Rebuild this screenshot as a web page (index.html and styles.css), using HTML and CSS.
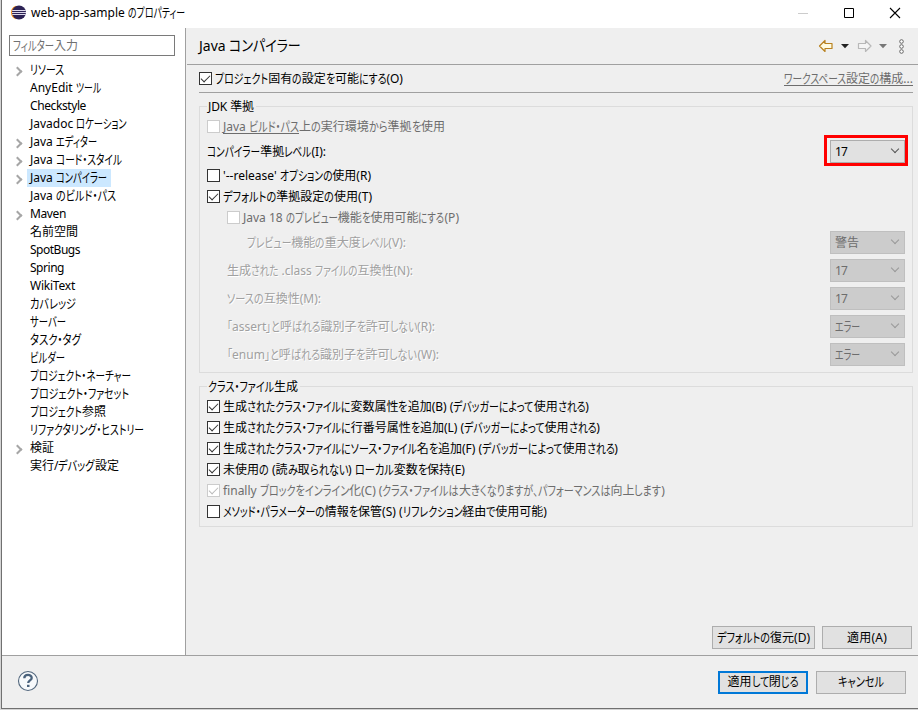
FILE: index.html
```html
<!DOCTYPE html>
<html lang="ja">
  <head>
    <meta charset="UTF-8" />
    <meta name="viewport" content="width=device-width, initial-scale=1.0" />
    <title>web-app-sample のプロパティー</title>
    <link rel="stylesheet" href="styles.css">
  </head>
  <body>
    <div class="window">
      <div class="titlebar">
        <svg class="logo" width="15" height="15" viewBox="0 0 15 15">
          <path d="M5 .8A7 7 0 0 0 5 14.2" fill="#f7941e" />
          <circle cx="8" cy="7.5" r="7" fill="#2c2255" />
          <path d="M1.2 5.5h13.6M1 7.5h14M1.2 9.5h13.6" stroke="#dcd8ea" stroke-width="1.1" />
        </svg>
        <span class="caption" data-width="154">web-app-sample のプロパティー</span>
        <div class="controls">
          <svg width="12" height="12" viewBox="0 0 12 12"><path d="M1 6.5h10" stroke="#ccc" /></svg>
          <svg width="12" height="12" viewBox="0 0 12 12"><path d="M1.5 1.5h9v9h-9z" fill="none" stroke="#000" /></svg>
          <svg width="12" height="12" viewBox="0 0 12 12"><path d="M1 1l10 10M11 1L1 11" stroke="#000" stroke-width="1.1" /></svg>
        </div>
      </div>

      <div class="main">
        <div class="sidebar">
          <div class="filter"><span data-width="65">フィルター入力</span></div>
          <ul class="tree">
            <li class="parent"><span data-width="34">リソース</span></li>
            <li><span data-width="71">AnyEdit ツール</span></li>
            <li><span data-width="56">Checkstyle</span></li>
            <li><span data-width="97">Javadoc ロケーション</span></li>
            <li class="parent"><span data-width="67">Java エディター</span></li>
            <li class="parent"><span data-width="92">Java コード・スタイル</span></li>
            <li class="parent selected"><span data-width="77">Java コンパイラー</span></li>
            <li><span data-width="86">Java のビルド・パス</span></li>
            <li class="parent"><span data-width="36">Maven</span></li>
            <li><span data-width="48">名前空間</span></li>
            <li><span data-width="50">SpotBugs</span></li>
            <li><span data-width="34">Spring</span></li>
            <li><span data-width="45">WikiText</span></li>
            <li><span data-width="46">カバレッジ</span></li>
            <li><span data-width="36">サーバー</span></li>
            <li><span data-width="51">タスク・タグ</span></li>
            <li><span data-width="35">ビルダー</span></li>
            <li><span data-width="101">プロジェクト・ネーチャー</span></li>
            <li><span data-width="99">プロジェクト・ファセット</span></li>
            <li><span data-width="76">プロジェクト参照</span></li>
            <li><span data-width="114">リファクタリング・ヒストリー</span></li>
            <li class="parent"><span data-width="24">検証</span></li>
            <li><span data-width="89">実行/デバッグ設定</span></li>
          </ul>
        </div>

        <div class="page">
          <div class="page-header">
            <span class="page-title" data-width="102">Java コンパイラー</span>
            <svg class="tools" width="92" height="18" viewBox="0 0 92 18">
              <path d="M1.5 9l5.500-5.500v3h7v5H7v3z" fill="#fffbe0" stroke="#b8811f" stroke-width="1.200" stroke-linejoin="round" />
              <path d="M23 7h8l-4 4.200z" fill="#222" />
              <path d="M53 9l-5.500-5.500v3h-7v5h7v3z" fill="#f5f5f5" stroke="#b8b8b8" stroke-width="1.200" stroke-linejoin="round" />
              <path d="M61 7h8l-4 4.200z" fill="#777" />
              <g fill="#fff" stroke="#666"><circle cx="83.500" cy="4.500" r="1.800" /><circle cx="83.500" cy="9.500" r="1.800" /><circle cx="83.500" cy="14.500" r="1.800" /></g>
            </svg>
          </div>

          <div class="page-body">
            <div class="project-row">
              <div class="check"><i class="box on"></i><span data-width="188">プロジェクト固有の設定を可能にする(O)</span></div>
              <span class="link" data-width="129">ワークスペース設定の構成...</span>
            </div>

            <fieldset class="group jdk">
              <legend><span data-width="46">JDK 準拠</span></legend>
              <div class="check muted first h22"><i class="box"></i><span class="link" data-width="76">Java ビルド・パス</span><span data-width="146">上の実行環境から準拠を使用</span></div>
              <div class="field h28">
                <span data-width="119">コンパイラー準拠レベル(I):</span>
                <div class="combo marked"><span data-width="12">17</span></div>
              </div>
              <div class="check h21"><i class="box"></i><span data-width="148">'--release' オプションの使用(R)</span></div>
              <div class="check h21"><i class="box on"></i><span data-width="149">デフォルトの準拠設定の使用(T)</span></div>
              <div class="check muted indent h21"><i class="box"></i><span data-width="216">Java 18 のプレビュー機能を使用可能にする(P)</span></div>
              <div class="field disabled indent-more h28">
                <span data-width="159">プレビュー機能の重大度レベル(V):</span>
                <div class="combo"><span data-width="24">警告</span></div>
              </div>
              <div class="field disabled indent h28">
                <span data-width="186">生成された .class ファイルの互換性(N):</span>
                <div class="combo"><span data-width="12">17</span></div>
              </div>
              <div class="field disabled indent h28">
                <span data-width="94">ソースの互換性(M):</span>
                <div class="combo"><span data-width="12">17</span></div>
              </div>
              <div class="field disabled indent h28">
                <span data-width="208">「assert」と呼ばれる識別子を許可しない(R):</span>
                <div class="combo"><span data-width="25">エラー</span></div>
              </div>
              <div class="field disabled indent h28">
                <span data-width="212">「enum」と呼ばれる識別子を許可しない(W):</span>
                <div class="combo"><span data-width="25">エラー</span></div>
              </div>
            </fieldset>

            <fieldset class="group classfile">
              <legend><span data-width="90">クラス・ファイル生成</span></legend>
              <div class="check h21"><i class="box on"></i><span data-width="366">生成されたクラス・ファイルに変数属性を追加(B) (デバッガーによって使用される)</span></div>
              <div class="check h21"><i class="box on"></i><span data-width="377">生成されたクラス・ファイルに行番号属性を追加(L) (デバッガーによって使用される)</span></div>
              <div class="check h21"><i class="box on"></i><span data-width="395">生成されたクラス・ファイルにソース・ファイル名を追加(F) (デバッガーによって使用される)</span></div>
              <div class="check h21"><i class="box on"></i><span data-width="242">未使用の (読み取られない) ローカル変数を保持(E)</span></div>
              <div class="check muted h21"><i class="box on"></i><span data-width="442">finally ブロックをインライン化(C) (クラス・ファイルは大きくなりますが、パフォーマンスは向上します)</span></div>
              <div class="check h21"><i class="box"></i><span data-width="324">メソッド・パラメーターの情報を保管(S) (リフレクション経由で使用可能)</span></div>
            </fieldset>

            <div class="page-buttons">
              <button class="btn wide"><span data-width="93">デフォルトの復元(D)</span></button>
              <button class="btn"><span data-width="40">適用(A)</span></button>
            </div>
          </div>
        </div>
      </div>

      <div class="footer">
        <svg width="22" height="22" viewBox="0 0 22 22">
          <circle cx="11" cy="11" r="9.500" fill="#f7f9fb" stroke="#52677d" stroke-width="1.100" />
          <path d="M7.300 8.200C7.300 3.900 14.700 4 14.700 7.900c0 2.500-3.500 2.600-3.500 5.100" fill="none" stroke="#4a627c" stroke-width="2.300" />
          <path d="M10 14.800h2.500v2.200H10z" fill="#4a627c" />
        </svg>
        <div class="dialog-buttons">
          <button class="btn primary"><span data-width="71">適用して閉じる</span></button>
          <button class="btn"><span data-width="46">キャンセル</span></button>
        </div>
      </div>
    </div>
    <script src="script.js"></script>
  </body>
</html>
```

FILE: styles.css
```css
* {
  box-sizing: border-box;
}
body {
  margin: 0;
  background-color: #d4d4d4;
  font: 12px/18px "Noto Sans", "Noto Sans CJK JP", sans-serif;
  color: #000;
  overflow: hidden;
}
svg {
  display: block;
}
[data-width] {
  display: inline-block;
  flex: none;
  white-space: pre;
  text-align: left;
  font-feature-settings: "palt";
}
.kana {
  display: inline-block;
  transform-origin: 0 50%;
}

.window {
  display: flex;
  flex-direction: column;
  width: 917px;
  height: 709px;
  margin-left: 1px;
  border: 1px solid #707070;
  border-width: 0 0 1px 1px;
  background-color: #efefef;
}
.titlebar {
  display: flex;
  align-items: center;
  height: 28px;
  padding: 0 17px 3px 9px;
  background-color: #fff;
}
.caption {
  margin-left: 5px;
}
.controls {
  display: flex;
  gap: 34px;
  margin-left: auto;
}

.main {
  display: flex;
  height: 627px;
}
.sidebar {
  width: 184px;
  padding: 7px 10px 0 7px;
  border-right: 1px solid #a0a0a0;
  background-color: #fff;
}
.filter {
  height: 21px;
  padding: 1px 0 0 3px;
  border: 1px solid #7a7a7a;
  color: #707070;
}
.tree {
  margin: 5px 0 0;
  padding: 0;
  list-style: none;
}
.tree li {
  display: flex;
  align-items: center;
  height: 18px;
  padding-left: 21px;
}
.tree .parent {
  padding-left: 6px;
}
.tree .parent::before {
  content: "";
  width: 5px;
  height: 5px;
  margin: 3px 8px 0 0;
  border: solid #a6a6a6;
  border-width: 2px 2px 0 0;
  transform: translateX(-1px) rotate(45deg);
}
.tree .selected span[data-width] {
  box-shadow: -3px 0 #cce8ff, 4px 0 #cce8ff;
  background-color: #cce8ff;
}

.page {
  display: flex;
  flex-direction: column;
  flex: 1;
  padding-left: 1px;
}
.page-header {
  display: flex;
  align-items: center;
  height: 37px;
  padding: 0 8px 0 12px;
  border-bottom: 1px solid #a0a0a0;
}
.page-title {
  font-size: 14px;
}
.tools {
  margin-left: auto;
}
.page-body {
  display: flex;
  flex-direction: column;
  flex: 1;
  padding: 0 5px 6px 12px;
}
.project-row {
  display: flex;
  align-items: center;
  justify-content: space-between;
  height: 28px;
  border-bottom: 1px solid #a0a0a0;
}
.link {
  height: 15px;
  border-bottom: 1px solid #6d6d6d;
  line-height: 16px;
  color: #6d6d6d;
}

.group {
  min-width: 0;
  margin: 0;
  padding: 0 7px;
  border: 1px solid #dcdcdc;
}
.group legend {
  height: 18px;
  padding: 1px 2px 0 1px;
}
.jdk {
  height: 276px;
  margin-top: 4px;
}
.classfile {
  height: 150px;
  margin-top: 4px;
}
.classfile legend {
  height: 19px;
}
.h21 {
  height: 21px;
}
.h22 {
  height: 22px;
}
.h28 {
  height: 28px;
}
.check,
.field {
  display: flex;
  align-items: center;
}
.field {
  justify-content: space-between;
}
.field > span,
.first > span:last-child {
  padding-top: 2px;
}
.indent {
  padding-left: 20px;
}
.indent-more {
  padding-left: 40px;
}
.box {
  width: 13px;
  height: 13px;
  margin-right: 3px;
  border: 1px solid #333;
  background-color: #fff;
  color: #333;
}
.box.on::before {
  content: "";
  display: block;
  width: 8px;
  height: 4px;
  margin: 2px 0 0 1px;
  border: solid currentColor;
  border-width: 0 0 1.5px 1.5px;
  transform: rotate(-45deg);
}
.muted {
  color: #6d6d6d;
}
.muted .box {
  border-color: #ccc;
  color: #bbb;
}
.disabled {
  color: #a0a0a0;
  text-shadow: 1px 1px #fff;
}
.combo {
  display: flex;
  position: relative;
  align-items: center;
  justify-content: space-between;
  width: 75px;
  height: 23px;
  padding: 1px 5px 0 4px;
  border: 1px solid #adadad;
  background-color: #e1e1e1;
}
.combo::after {
  content: "";
  width: 5px;
  height: 5px;
  margin: -5px 1px 0 0;
  border: solid #555;
  border-width: 0 1px 1px 0;
  transform: rotate(45deg);
}
.disabled .combo {
  border-color: #bfbfbf;
  background-color: #ccc;
  color: #6d6d6d;
  text-shadow: none;
}
.disabled .combo::after {
  border-color: #999;
}
/* red frame around the compliance level */
.marked::before {
  content: "";
  position: absolute;
  inset: -6px -4px -4px -7px;
  border: 3px solid #f00;
}

.page-buttons {
  display: flex;
  justify-content: flex-end;
  gap: 7px;
  margin: auto 1px 0 0;
}
.btn {
  width: 90px;
  height: 23px;
  padding: 0;
  border: 1px solid #adadad;
  background-color: #e1e1e1;
  font: inherit;
  color: #000;
}
.wide {
  width: 103px;
}
.primary {
  border: 2px solid #0078d7;
}
.footer {
  display: flex;
  align-items: center;
  justify-content: space-between;
  height: 53px;
  padding: 0 12px 0 15px;
  border-top: 1px solid #a0a0a0;
}
.footer svg {
  margin-bottom: 2px;
}
.dialog-buttons {
  display: flex;
  gap: 8px;
}
```

FILE: script.js
```js
// UI fonts have narrow kana: squeeze the kana runs until the label has its width
document.querySelectorAll('[data-width]').forEach(function(label){
  const target = Number(label.dataset.width)
  const natural = label.getBoundingClientRect().width
  const parts = label.textContent.split(/([\u3000-\u30ff]+)/)

  if(parts.length === 1){
    label.style.letterSpacing = `${(target - natural) / label.textContent.length}px`
    return
  }

  label.textContent = ''
  parts.forEach(function(part, i){
    if(!part) return
    const run = document.createElement('span')
    run.textContent = part
    if(i % 2) run.className = 'kana'
    label.append(run)
  })

  const runs = [...label.querySelectorAll('.kana')]
  const widths = runs.map(run => run.getBoundingClientRect().width)
  const kana = widths.reduce((a, b) => a + b, 0)
  const scale = (target - (label.getBoundingClientRect().width - kana)) / kana

  runs.forEach(function(run, i){
    run.style.width = `${widths[i] * scale}px`
    run.style.transform = `scale(${scale}, 1.08)`
  })
})
```
